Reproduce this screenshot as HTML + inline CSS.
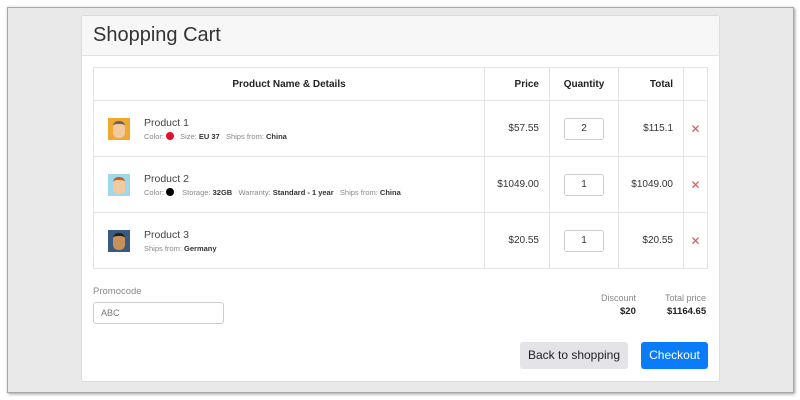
<!DOCTYPE html>
<html><head><style>
body{margin:0;width:800px;height:400px;background:#fff;font-family:"Liberation Sans",sans-serif;position:relative;overflow:hidden}
.frame{position:absolute;left:7px;top:7px;width:785px;height:384px;background:#e9e9e9;border:1px solid #a8a8a8;box-shadow:1px 1px 3px rgba(0,0,0,.4)}
.card{position:absolute;left:81px;top:15px;width:637px;height:365px;background:#fff;border:1px solid #ddd;border-radius:3px}
.hdr{height:39px;background:#f7f7f7;border-bottom:1px solid #e2e2e2;font-size:20px;color:#333;line-height:38px;padding-left:11px}
table{position:absolute;left:11px;top:51px;border-collapse:collapse;font-size:10px;color:#333}
td,th{border:1px solid #e3e3e3;padding:0}
th{height:32px;font-size:10px;font-weight:bold;color:#222}
td{height:55px}
.r{text-align:right;padding-right:10px}
.q{display:inline-block;width:38px;height:20px;border:1px solid #ccc;border-radius:3px;line-height:20px;text-align:center}
.x{color:#e05050;text-align:center;font-size:12px}
.av{position:absolute;left:14px;width:22px;height:22px}
.nm{font-size:10.5px;color:#444;position:absolute;left:50px}
.dt{font-size:7.5px;color:#888;position:absolute;left:50px;white-space:nowrap}
.dt b{color:#333;font-weight:bold}
.dot{display:inline-block;width:8px;height:8px;border-radius:50%;vertical-align:-1px;margin-right:6px}
.lbl{position:absolute;font-size:9px;color:#888}
.btn{position:absolute;height:27px;line-height:27px;font-size:12px;border-radius:3px;text-align:center}
</style></head><body>
<div class="frame"></div>
<div class="card">
<div class="hdr">Shopping Cart</div>
<table>
<tr><th style="width:390px">Product Name &amp; Details</th><th class="r" style="width:54px">Price</th><th style="width:68px">Quantity</th><th class="r" style="width:54px">Total</th><th style="width:23px"></th></tr>
<tr><td style="position:relative"><div class="av" style="top:17px;background:#f0a830"><div style="margin:3px 5px 0;width:12px;height:14px;background:#f2c9a0;border-radius:5px;border-top:3px solid #666"></div></div><div class="nm" style="top:16px">Product 1</div><div class="dt" style="top:31px">Color: <span class="dot" style="background:#e0102a"></span>Size: <b>EU 37</b> &nbsp; Ships from: <b>China</b></div></td><td class="r">$57.55</td><td style="text-align:center"><span class="q">2</span></td><td class="r">$115.1</td><td class="x">✕</td></tr>
<tr><td style="position:relative"><div class="av" style="top:17px;background:#9fd8e8"><div style="margin:3px 5px 0;width:12px;height:14px;background:#f2c9a0;border-radius:5px;border-top:3px solid #c0602a"></div></div><div class="nm" style="top:16px">Product 2</div><div class="dt" style="top:31px">Color: <span class="dot" style="background:#000"></span> Storage: <b>32GB</b> &nbsp; Warranty: <b>Standard - 1 year</b> &nbsp; Ships from: <b>China</b></div></td><td class="r">$1049.00</td><td style="text-align:center"><span class="q">1</span></td><td class="r">$1049.00</td><td class="x">✕</td></tr>
<tr><td style="position:relative"><div class="av" style="top:17px;background:#3a5a80"><div style="margin:3px 5px 0;width:12px;height:14px;background:#c8905a;border-radius:5px;border-top:3px solid #222"></div></div><div class="nm" style="top:16px">Product 3</div><div class="dt" style="top:31px">Ships from: <b>Germany</b></div></td><td class="r">$20.55</td><td style="text-align:center"><span class="q">1</span></td><td class="r">$20.55</td><td class="x">✕</td></tr>
</table>
<div class="lbl" style="left:11px;top:270px;font-size:9.5px">Promocode</div>
<div style="position:absolute;left:11px;top:286px;width:122px;height:20px;border:1px solid #ccc;border-radius:3px;font-size:9px;color:#777;line-height:20px;padding-left:7px">ABC</div>
<div class="lbl" style="left:519px;top:277px">Discount</div>
<div style="position:absolute;left:538px;top:290px;font-size:9.5px;font-weight:bold;color:#222">$20</div>
<div class="lbl" style="left:583px;top:277px">Total price</div>
<div style="position:absolute;left:585px;top:290px;font-size:9.5px;font-weight:bold;color:#222">$1164.65</div>
<div class="btn" style="left:438px;top:326px;width:108px;background:#e4e4e8;color:#222">Back to shopping</div>
<div class="btn" style="left:559px;top:326px;width:67px;background:#0a7cf8;color:#fff">Checkout</div>
</div>
</body></html>
